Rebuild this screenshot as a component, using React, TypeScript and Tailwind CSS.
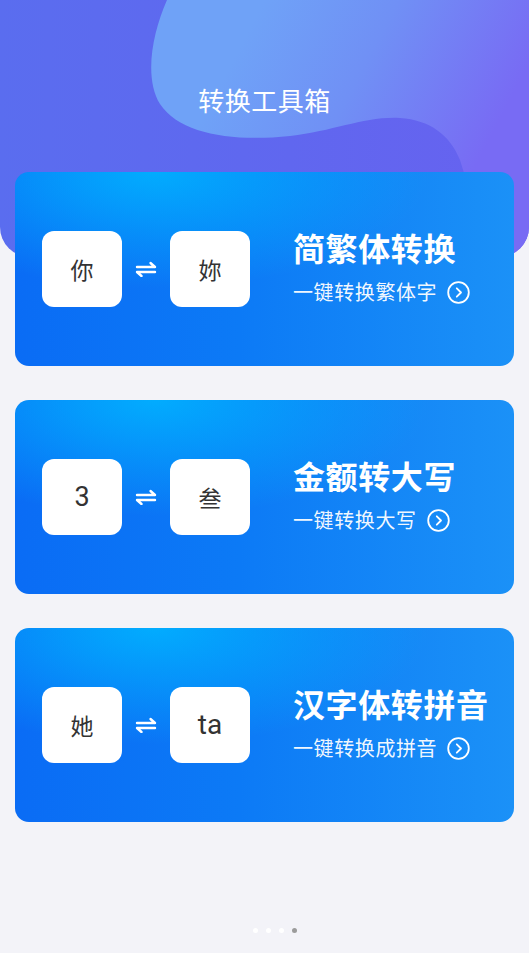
import React from "react";

type Tool = {
  from: string;
  to: string;
  fromClass: string;
  toClass: string;
  title: string;
  desc: string;
};

const tools: Tool[] = [
  { from: "你", to: "妳", fromClass: "text-[23px]", toClass: "text-[23px]", title: "简繁体转换", desc: "一键转换繁体字" },
  { from: "3", to: "叁", fromClass: "text-[27px] font-['Roboto',sans-serif]", toClass: "text-[23px]", title: "金额转大写", desc: "一键转换大写" },
  { from: "她", to: "ta", fromClass: "text-[23px]", toClass: "text-[28px] font-['Roboto',sans-serif]", title: "汉字体转拼音", desc: "一键转换成拼音" },
];

function SwapArrow() {
  return (
    <svg width="22" height="16" viewBox="0 0 22 16" fill="none" stroke="white" strokeWidth="2.4" strokeLinecap="round" strokeLinejoin="round">
      <path d="M2 6H20L15.5 2" />
      <path d="M20 11H2L6.5 15" />
    </svg>
  );
}

function CircleChevron() {
  return (
    <svg width="23" height="23" viewBox="0 0 23 23" fill="none" stroke="white" strokeWidth="1.8" strokeLinecap="round" strokeLinejoin="round">
      <circle cx="11.5" cy="11.5" r="10.3" />
      <path d="M9.8 7.3L14 11.5L9.8 15.7" />
    </svg>
  );
}

// light wave over the header, its right lobe runs down behind the cards
function HeaderBlob() {
  return (
    <svg className="absolute inset-0 h-full w-full" viewBox="0 0 529 257" preserveAspectRatio="none">
      <defs>
        <linearGradient id="lightBlob" x1="0.3" y1="0" x2="1" y2="0.25">
          <stop offset="0" stopColor="#6fa2f7" />
          <stop offset="0.45" stopColor="#7090f5" />
          <stop offset="1" stopColor="#786bf4" />
        </linearGradient>
      </defs>
      <path
        d="M167 0C152 34 144 78 160 104C180 134 232 142 290 136C335 131 365 116 400 118C430 120 450 135 460 160C470 190 475 220 478 257L529 257L529 0Z"
        fill="url(#lightBlob)"
      />
    </svg>
  );
}

function ToolCard({ tool }: { tool: Tool }) {
  return (
    <div className="flex h-[194px] items-center rounded-[14px] bg-[radial-gradient(ellipse_55%_60%_at_28%_0%,#02acfe_0%,rgba(2,172,254,0)_100%),linear-gradient(90deg,#0a6cf5_0%,#0c7af6_45%,#1b91f7_100%)] pl-[27px]">
      <div className="flex h-[76px] w-[80px] items-center justify-center rounded-[12px] bg-white text-[#333]">
        <span className={tool.fromClass}>{tool.from}</span>
      </div>
      <div className="flex w-[48px] justify-center">
        <SwapArrow />
      </div>
      <div className="flex h-[76px] w-[80px] items-center justify-center rounded-[12px] bg-white text-[#333]">
        <span className={tool.toClass}>{tool.to}</span>
      </div>
      <div className="ml-[43px] flex flex-col pb-[6px] text-white">
        <h2 className="text-[32px] font-bold leading-[40px] tracking-[0.6px]">{tool.title}</h2>
        <div className="mt-[12px] flex items-center gap-[10px]">
          <span className="text-[20px] leading-[26px] tracking-[0.6px] text-white/95">{tool.desc}</span>
          <CircleChevron />
        </div>
      </div>
    </div>
  );
}

export default function App() {
  return (
    <div className="min-h-screen bg-[#f3f3f8] font-['Noto_Sans_CJK_SC','Noto_Sans',sans-serif]">
      <header className="relative h-[257px] overflow-hidden rounded-b-[30px] bg-[linear-gradient(90deg,#5a6def_0%,#6067ef_55%,#6762f0_100%)]">
        <HeaderBlob />
        <h1 className="relative pt-[84px] text-center text-[26px] leading-[32px] tracking-[0.5px] text-white">转换工具箱</h1>
      </header>

      <main className="relative -mt-[85px] flex flex-col gap-[34px] px-[15px]">
        {tools.map((tool) => (
          <ToolCard key={tool.title} tool={tool} />
        ))}
      </main>

      <div className="mt-[106px] flex justify-center gap-[8px] pl-[20px]">
        <span className="h-[5px] w-[5px] rounded-full bg-white" />
        <span className="h-[5px] w-[5px] rounded-full bg-white" />
        <span className="h-[5px] w-[5px] rounded-full bg-white" />
        <span className="h-[5px] w-[5px] rounded-full bg-[#9b9b9b]" />
      </div>
    </div>
  );
}
